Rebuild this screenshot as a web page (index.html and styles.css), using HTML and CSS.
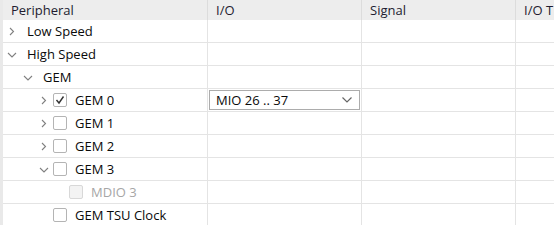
FILE: index.html
```html
<!DOCTYPE html>
<html lang="en">
  <head>
    <meta charset="UTF-8" />
    <title>Peripheral I/O</title>
    <link rel="stylesheet" href="styles.css">
  </head>
  <body>
    <div class="grid">
        <div class="row head">
            <div class="cell">Peripheral</div>
            <div class="cell">I/O</div>
            <div class="cell">Signal</div>
            <div class="cell">I/O T</div>
        </div>

        <div class="row">
            <div class="cell tree lvl-0">
                <span class="exp"><svg width="16" height="22"><path d="M7 8 L10.5 11.5 L7 15" /></svg></span>
                <span class="label">Low Speed</span>
            </div>
            <div class="cell"></div><div class="cell"></div><div class="cell"></div>
        </div>

        <div class="row">
            <div class="cell tree lvl-0">
                <span class="exp"><svg width="16" height="22"><path d="M5 10 L9 14 L13 10" /></svg></span>
                <span class="label">High Speed</span>
            </div>
            <div class="cell"></div><div class="cell"></div><div class="cell"></div>
        </div>

        <div class="row">
            <div class="cell tree lvl-1">
                <span class="exp"><svg width="16" height="22"><path d="M5 10 L9 14 L13 10" /></svg></span>
                <span class="label">GEM</span>
            </div>
            <div class="cell"></div><div class="cell"></div><div class="cell"></div>
        </div>

        <div class="row">
            <div class="cell tree lvl-2">
                <span class="exp"><svg width="16" height="22"><path d="M7 8 L10.5 11.5 L7 15" /></svg></span>
                <span class="cb checked"><svg width="12" height="12"><path d="M2.5 6 L5 9 L9.5 2.5" /></svg></span>
                <span class="label">GEM 0</span>
            </div>
            <div class="cell">
                <div class="select">
                    <span>MIO 26 .. 37</span>
                    <svg width="10" height="6"><path d="M0.5 0.5 L5 5 L9.5 0.5" /></svg>
                </div>
            </div>
            <div class="cell"></div><div class="cell"></div>
        </div>

        <div class="row">
            <div class="cell tree lvl-2">
                <span class="exp"><svg width="16" height="22"><path d="M7 8 L10.5 11.5 L7 15" /></svg></span>
                <span class="cb"></span>
                <span class="label">GEM 1</span>
            </div>
            <div class="cell"></div><div class="cell"></div><div class="cell"></div>
        </div>

        <div class="row">
            <div class="cell tree lvl-2">
                <span class="exp"><svg width="16" height="22"><path d="M7 8 L10.5 11.5 L7 15" /></svg></span>
                <span class="cb"></span>
                <span class="label">GEM 2</span>
            </div>
            <div class="cell"></div><div class="cell"></div><div class="cell"></div>
        </div>

        <div class="row">
            <div class="cell tree lvl-2">
                <span class="exp"><svg width="16" height="22"><path d="M5 10 L9 14 L13 10" /></svg></span>
                <span class="cb"></span>
                <span class="label">GEM 3</span>
            </div>
            <div class="cell"></div><div class="cell"></div><div class="cell"></div>
        </div>

        <div class="row">
            <div class="cell tree lvl-3 disabled">
                <span class="exp"></span>
                <span class="cb"></span>
                <span class="label">MDIO 3</span>
            </div>
            <div class="cell"></div><div class="cell"></div><div class="cell"></div>
        </div>

        <div class="row">
            <div class="cell tree lvl-2">
                <span class="exp"></span>
                <span class="cb"></span>
                <span class="label">GEM TSU Clock</span>
            </div>
            <div class="cell"></div><div class="cell"></div><div class="cell"></div>
        </div>
    </div>
  </body>
</html>
```

FILE: styles.css
```css
body {
    margin: 0;
    overflow: hidden;
    background: #ffffff;
    font-family: "Open Sans", "Noto Sans", sans-serif;
    font-size: 13px;
    color: #0a0a0a;
}
.grid {
    border-left: 3px solid #e9e9e9;
}
.row {
    display: grid;
    grid-template-columns: 205px 154px 154px 1fr;
    height: 23px;
    border-bottom: 1px solid #e4e4e4;
    box-sizing: border-box;
}
.cell {
    border-right: 1px solid #e4e4e4;
    display: flex;
    align-items: center;
    white-space: nowrap;
    overflow: hidden;
}
.row .cell:last-child {
    border-right: none;
}
.head {
    height: 20px;
    background: #ededed;
    border-bottom: none;
    color: #221c30;
}
.head .cell {
    padding-left: 8px;
    border-right-color: #dcdcdc;
}
.tree .exp {
    width: 16px;
    height: 22px;
    flex: none;
}
.exp svg path {
    fill: none;
    stroke: #808080;
    stroke-width: 1.1;
}
.lvl-1 { padding-left: 16px; }
.lvl-2 { padding-left: 32px; }
.lvl-3 { padding-left: 48px; }
.cb {
    width: 12px;
    height: 12px;
    margin-left: 2px;
    border: 1px solid #b4b4b4;
    border-radius: 2px;
    background: #fff;
    flex: none;
    display: flex;
}
.cb svg path {
    fill: none;
    stroke: #333;
    stroke-width: 1.4;
}
.label {
    margin-left: 8px;
}
.disabled .cb {
    border-color: #d8d8d8;
    background: #f3f3f3;
}
.disabled .label {
    color: #a6a6a6;
}
.select {
    width: 151px;
    height: 20px;
    margin-left: 1px;
    box-sizing: border-box;
    border: 1px solid #acacac;
    display: flex;
    align-items: center;
    justify-content: space-between;
    padding: 0 7px 0 6px;
}
.select svg path {
    fill: none;
    stroke: #666;
    stroke-width: 1.2;
}
```
